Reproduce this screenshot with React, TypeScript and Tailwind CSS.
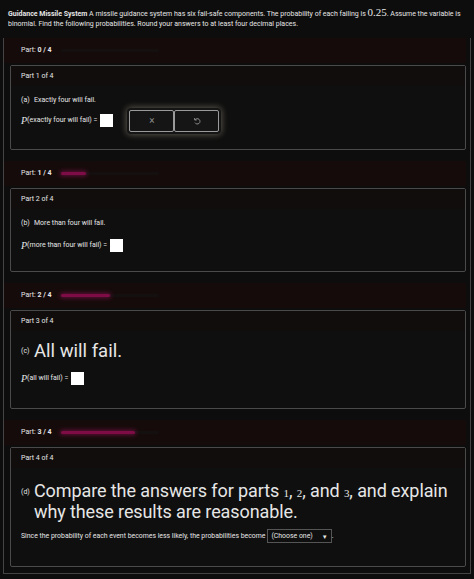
import { ReactNode } from "react";

function Band({ done }: { done: number }) {
  return (
    <div className="mr-[4px] flex h-[25px] items-center bg-[#160b0b] pl-[17px] text-[7px]">
      <span className="w-[40px]">
        Part: <span className="font-bold">{done} / 4</span>
      </span>
      <div className="h-[3px] w-[98px] rounded-full bg-[#141010]">
        {done > 0 && (
          <div
            className="h-[3px] rounded-full bg-[#7e0c46] shadow-[0_0_4px_1px_rgba(150,20,85,0.6)]"
            style={{ width: `${(done / 4) * 98}px` }}
          />
        )}
      </div>
    </div>
  );
}

function PartBox({ n, children, h }: { n: number; children: ReactNode; h: string }) {
  return (
    <div className={`ml-[6px] mr-[4px] mt-[2px] rounded-[2px] border border-[#4a4a4a] bg-[#0f0f0f] ${h}`}>
      <div className="flex h-[20px] items-center bg-[#120d0d] pl-[10px] text-[7px]">Part {n} of 4</div>
      <div className="px-[10px]">{children}</div>
    </div>
  );
}

function Answer({ label }: { label: string }) {
  return (
    <div className="flex items-center text-[7px]">
      <span className="font-['Liberation_Serif',serif] text-[10px] italic">P</span>
      <span>({label}) =</span>
      <span className="ml-[3px] inline-block h-[13px] w-[13px] bg-white" />
    </div>
  );
}

const num = "font-['Liberation_Serif',serif] text-[11px] leading-none";

export default function App() {
  return (
    <div className="min-h-[579px] w-[474px] bg-[#0d0d0d] pb-[3px] font-['Roboto',sans-serif] text-[#e6e6e6]">
      <p className="px-[8px] pt-[7px] text-[7px] leading-[10px]">
        <span className="font-bold">Guidance Missile System</span> A missile guidance system has six fail-safe
        components. The probability of each failing is <span className={num}>0.25</span>. Assume the variable is
        binomial. Find the following probabilities. Round your answers to at least four decimal places.
      </p>

      <div className="mx-[3px] mt-[9px] border-x border-b border-[#444] pb-[6px]">
        <Band done={0} />
        <PartBox n={1} h="h-[85px]">
          <div className="mt-[9px] flex text-[7px]">
            <span className="w-[13px]">(a)</span>
            <span>Exactly four will fail.</span>
          </div>
          <div className="mt-[2px] flex items-center">
            <Answer label="exactly four will fail" />
            <div className="ml-[14px] flex rounded-[4px] bg-[#151515] p-[2px] shadow-[0_0_6px_1px_rgba(220,210,180,0.35)]">
              <div className="flex h-[22px] w-[45px] items-center justify-center rounded-[2px] border border-[#9a9a9a] text-[10px] text-[#8a8a8a]">
                ×
              </div>
              <div className="flex h-[22px] w-[45px] items-center justify-center rounded-[2px] border border-[#9a9a9a]">
                <svg width="8" height="8" viewBox="0 0 24 24" fill="none" stroke="#8a8a8a" strokeWidth="3">
                  <path d="M6 9a8 8 0 1 1 0 8" />
                  <path d="M5 3v6h6" />
                </svg>
              </div>
            </div>
          </div>
        </PartBox>

        <div className="mt-[11px]">
          <Band done={1} />
          <PartBox n={2} h="h-[84px]">
            <div className="mt-[9px] flex text-[7px]">
              <span className="w-[13px]">(b)</span>
              <span>More than four will fail.</span>
            </div>
            <div className="mt-[9px]">
              <Answer label="more than four will fail" />
            </div>
          </PartBox>
        </div>

        <div className="mt-[11px]">
          <Band done={2} />
          <PartBox n={3} h="h-[99px]">
            <div className="mt-[9px] flex items-center">
              <span className="w-[13px] text-[7px]">(c)</span>
              <span className="text-[18.5px] leading-[22px]">All will fail.</span>
            </div>
            <div className="mt-[9px]">
              <Answer label="all will fail" />
            </div>
          </PartBox>
        </div>

        <div className="mt-[11px]">
          <Band done={3} />
          <PartBox n={4} h="h-[120px]">
            <div className="mt-[12px] flex">
              <span className="mt-[7px] w-[13px] shrink-0 text-[7px]">(d)</span>
              <span className="text-[18px] leading-[21px] tracking-[-0.1px]">
                Compare the answers for parts <span className={num}>1</span>, <span className={num}>2</span>, and{" "}
                <span className={num}>3</span>, and explain why these results are reasonable.
              </span>
            </div>
            <div className="mt-[7px] flex items-center text-[6.9px]">
              <span>Since the probability of each event becomes less likely, the probabilities become</span>
              <span className="ml-[2px] flex h-[14px] items-center gap-[9px] border border-[#555] px-[3px]">
                (Choose one) <span className="text-[6px]">▼</span>
              </span>
              <span>.</span>
            </div>
          </PartBox>
        </div>
      </div>
    </div>
  );
}
